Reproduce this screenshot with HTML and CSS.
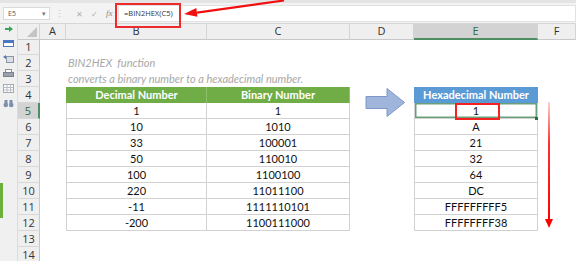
FILE: index.html
```html
<!DOCTYPE html>
<html lang="en">
<head>
    <meta charset="UTF-8">
    <title>BIN2HEX function</title>
    <link rel="stylesheet" href="styles.css">
</head>
<body>
<div class="app">
    <div class="formula-bar">
        <div class="name-box">E5<span class="caret">▾</span></div>
        <span class="fb-sep">⋮</span>
        <div class="fb-buttons">
            <span>✕</span>
            <span>✓</span>
            <span class="fx">fx</span>
        </div>
        <div class="formula-input">=BIN2HEX(C5)</div>
    </div>

    <div class="workspace">
        <div class="side-toolbar">
            <svg class="tool" width="10" height="8" viewBox="0 0 10 8"><path d="M1 3h4V1l4 3-4 3V5H1z" fill="#3aa35a"/></svg>
            <svg class="tool" width="11" height="9" viewBox="0 0 11 9"><rect x="0.5" y="1.5" width="10" height="6" fill="#fff" stroke="#4a78c2"/><rect x="1" y="2" width="9" height="2" fill="#4a78c2"/></svg>
            <svg class="tool" width="11" height="9" viewBox="0 0 11 9"><rect x="3.5" y="2.5" width="7" height="6" fill="#d8dde6" stroke="#8a96a8"/><path d="M0 3l3-2v4z" fill="#4a78c2"/></svg>
            <svg class="tool" width="11" height="9" viewBox="0 0 11 9"><rect x="2.5" y="0.5" width="6" height="3" fill="#fff" stroke="#8a8f98"/><rect x="0.5" y="3.5" width="10" height="4" fill="#9aa1ab" stroke="#7c828b"/></svg>
            <svg class="tool" width="11" height="9" viewBox="0 0 11 9"><rect x="0.5" y="0.5" width="10" height="8" fill="#fff" stroke="#a3a9b2"/><path d="M0.5 3.5h10M0.5 6h10M4 0.5v8M7.5 0.5v8" stroke="#b8bec6"/></svg>
            <svg class="tool" width="11" height="9" viewBox="0 0 11 9"><circle cx="2.8" cy="6" r="2.3" fill="#7d8fae"/><circle cx="8.2" cy="6" r="2.3" fill="#7d8fae"/><rect x="1.5" y="1" width="3" height="4" fill="#7d8fae"/><rect x="6.5" y="1" width="3" height="4" fill="#7d8fae"/></svg>
            <div class="side-mark"></div>
        </div>

        <div class="sheet">
            <div class="row head-row">
                <div class="corner"><span class="corner-tri"></span></div>
                <div class="colh">A</div>
                <div class="colh">B</div>
                <div class="colh">C</div>
                <div class="colh">D</div>
                <div class="colh active">E</div>
                <div class="colh">F</div>
            </div>
            <div class="row">
                <div class="rowh">1</div><div></div><div></div><div></div><div></div><div></div><div></div>
            </div>
            <div class="row">
                <div class="rowh">2</div><div></div><div class="note">BIN2HEX&nbsp; function</div><div></div><div></div><div></div><div></div>
            </div>
            <div class="row">
                <div class="rowh">3</div><div></div><div class="note">converts a binary number to a hexadecimal number.</div><div></div><div></div><div></div><div></div>
            </div>
            <div class="row">
                <div class="rowh">4</div><div></div>
                <div class="cell th green first">Decimal Number</div>
                <div class="cell th green">Binary Number</div>
                <div></div>
                <div class="cell th blue first">Hexadecimal Number</div>
                <div></div>
            </div>
            <div class="row">
                <div class="rowh active">5</div><div></div>
                <div class="cell first">1</div><div class="cell">1</div><div></div>
                <div class="cell first selected">1</div><div></div>
            </div>
            <div class="row">
                <div class="rowh">6</div><div></div>
                <div class="cell first">10</div><div class="cell">1010</div><div></div>
                <div class="cell first">A</div><div></div>
            </div>
            <div class="row">
                <div class="rowh">7</div><div></div>
                <div class="cell first">33</div><div class="cell">100001</div><div></div>
                <div class="cell first">21</div><div></div>
            </div>
            <div class="row">
                <div class="rowh">8</div><div></div>
                <div class="cell first">50</div><div class="cell">110010</div><div></div>
                <div class="cell first">32</div><div></div>
            </div>
            <div class="row">
                <div class="rowh">9</div><div></div>
                <div class="cell first">100</div><div class="cell">1100100</div><div></div>
                <div class="cell first">64</div><div></div>
            </div>
            <div class="row">
                <div class="rowh">10</div><div></div>
                <div class="cell first">220</div><div class="cell">11011100</div><div></div>
                <div class="cell first">DC</div><div></div>
            </div>
            <div class="row">
                <div class="rowh">11</div><div></div>
                <div class="cell first">-11</div><div class="cell">1111110101</div><div></div>
                <div class="cell first">FFFFFFFFF5</div><div></div>
            </div>
            <div class="row">
                <div class="rowh">12</div><div></div>
                <div class="cell first">-200</div><div class="cell">1100111000</div><div></div>
                <div class="cell first">FFFFFFFF38</div><div></div>
            </div>
            <div class="row">
                <div class="rowh">13</div><div></div><div></div><div></div><div></div><div></div><div></div>
            </div>
            <div class="row">
                <div class="rowh">14</div><div></div><div></div><div></div><div></div><div></div><div></div>
            </div>
        </div>
    </div>

    <!-- annotations drawn over the screenshot -->
    <div class="mark-formula"></div>
    <div class="mark-cell"></div>
    <svg class="arrow-top" width="110" height="24" viewBox="0 0 110 24">
        <path d="M104 0.5 L17 12.6" stroke="#f01010" stroke-width="2.2"/>
        <polygon points="4,14 17.5,16.8 16.3,7.9" fill="#f01010"/>
    </svg>
    <svg class="arrow-blue" width="42" height="32" viewBox="0 0 42 32">
        <polygon points="1,9.5 22,9.5 22,1.5 39.5,15.5 22,29.5 22,21.5 1,21.5" fill="#9fb5dc" stroke="#7d98c8"/>
    </svg>
    <svg class="arrow-down" width="12" height="132" viewBox="0 0 12 132">
        <defs>
            <linearGradient id="fade" x1="0" y1="0" x2="0" y2="1">
                <stop offset="0" stop-color="#ffd0d0"/>
                <stop offset="0.35" stop-color="#ff3030"/>
                <stop offset="1" stop-color="#ff0000"/>
            </linearGradient>
        </defs>
        <rect x="5" y="2" width="2" height="118" fill="url(#fade)"/>
        <polygon points="2,119 10,119 6,128" fill="#ff0000"/>
    </svg>
</div>
</body>
</html>
```

FILE: styles.css
```css
body {
    margin: 0;
    background: #fff;
    font-family: "Open Sans", sans-serif;
}
.app {
    position: relative;
    width: 576px;
    height: 261px;
    overflow: hidden;
}
.formula-bar {
    height: 24px;
    box-sizing: border-box;
    border-top: 3px solid #e4e4e4;
    border-bottom: 1px solid #d6d6d6;
    background: #f3f3f3;
    display: flex;
    align-items: center;
    padding-left: 3px;
}
.name-box {
    width: 47px;
    height: 13px;
    box-sizing: border-box;
    background: #fff;
    border: 1px solid #dadada;
    font-size: 7px;
    color: #555;
    line-height: 11px;
    padding-left: 4px;
    display: flex;
    justify-content: space-between;
}
.caret {
    font-size: 7px;
    padding-right: 3px;
    color: #777;
}
.fb-sep {
    color: #c4c4c4;
    font-size: 9px;
    margin: 0 4px 0 5px;
}
.fb-buttons {
    display: flex;
    gap: 8px;
    align-items: center;
    color: #b0b0b0;
    font-size: 8px;
    padding-left: 8px;
    width: 50px;
    box-sizing: border-box;
}
.fb-buttons .fx {
    font-style: italic;
    font-family: "Liberation Serif", serif;
    font-size: 9px;
    color: #888;
}
.formula-input {
    flex: 1;
    height: 15px;
    background: #fff;
    border: 1px solid #e2e2e2;
    font-size: 7.5px;
    line-height: 14px;
    color: #333;
    padding-left: 5px;
}
.workspace {
    display: flex;
}
.side-toolbar {
    width: 18px;
    height: 237px;
    box-sizing: border-box;
    background: #f0f0f0;
    border-right: 1px solid #dcdcdc;
    display: flex;
    flex-direction: column;
    align-items: center;
    padding-top: 1px;
    gap: 6px;
    position: relative;
}
.tool {
    display: block;
}
.side-mark {
    position: absolute;
    left: 0;
    top: 159px;
    width: 3px;
    height: 35px;
    background: #6ab23b;
}
.sheet {
    flex: 1;
}
.row {
    display: grid;
    grid-template-columns: 22px 26px 141px 143px 64px 124px 1fr;
    height: 16px;
    font-family: "Lato", sans-serif;
    font-size: 11px;
    color: #111;
}
.head-row {
    height: 15px;
}
.corner, .colh {
    background: #efefef;
    border-right: 1px solid #d4d4d4;
    border-bottom: 1px solid #c8c8c8;
    box-sizing: border-box;
}
.corner {
    position: relative;
}
.corner-tri {
    position: absolute;
    right: 2px;
    bottom: 2px;
    width: 0;
    height: 0;
    border-left: 10px solid transparent;
    border-bottom: 10px solid #c4c4c4;
}
.colh {
    font-family: "Open Sans", sans-serif;
    font-size: 11px;
    color: #333;
    text-align: center;
    line-height: 14px;
}
.colh.active {
    background: #d3d3d3;
    border-bottom: 2px solid #4f8e63;
    color: #2f6b43;
}
.rowh {
    background: #efefef;
    border-right: 1px solid #c8c8c8;
    border-bottom: 1px solid #d8d8d8;
    box-sizing: border-box;
    font-family: "Open Sans", sans-serif;
    font-size: 11px;
    color: #333;
    text-align: center;
    line-height: 15px;
}
.rowh.active {
    background: #d3d3d3;
    border-right: 2px solid #4f8e63;
    color: #2f6b43;
}
.note {
    font-style: italic;
    color: #a8a8a8;
    white-space: nowrap;
    padding-left: 2px;
    line-height: 16px;
}
.cell {
    text-align: center;
    line-height: 15px;
    border-right: 1px solid #d2d2d2;
    border-bottom: 1px solid #d2d2d2;
    box-sizing: border-box;
    white-space: nowrap;
}
.cell.first {
    border-left: 1px solid #d2d2d2;
}
.th {
    color: #fff;
    font-weight: bold;
    border-bottom: none;
}
.th.green {
    background: #70ad47;
    border-color: #8fc06c;
}
.th.green.first {
    border-left-color: #70ad47;
}
.th.blue {
    background: #5b9bd5;
    border-color: #5b9bd5;
}
.cell.selected {
    box-shadow: inset 0 0 0 1.5px #6a9f79;
    position: relative;
}
.cell.selected::after {
    content: "";
    position: absolute;
    right: -1px;
    bottom: -2px;
    width: 3px;
    height: 3px;
    background: #2f6b43;
}
.mark-formula {
    position: absolute;
    left: 115px;
    top: 3px;
    width: 66px;
    height: 25px;
    box-sizing: border-box;
    border: 2px solid #ee2a2a;
}
.mark-cell {
    position: absolute;
    left: 455px;
    top: 103px;
    width: 45px;
    height: 17px;
    box-sizing: border-box;
    border: 2px solid #f52020;
}
.arrow-top {
    position: absolute;
    left: 180px;
    top: 0;
}
.arrow-blue {
    position: absolute;
    left: 365px;
    top: 87px;
}
.arrow-down {
    position: absolute;
    left: 543px;
    top: 100px;
}
```
